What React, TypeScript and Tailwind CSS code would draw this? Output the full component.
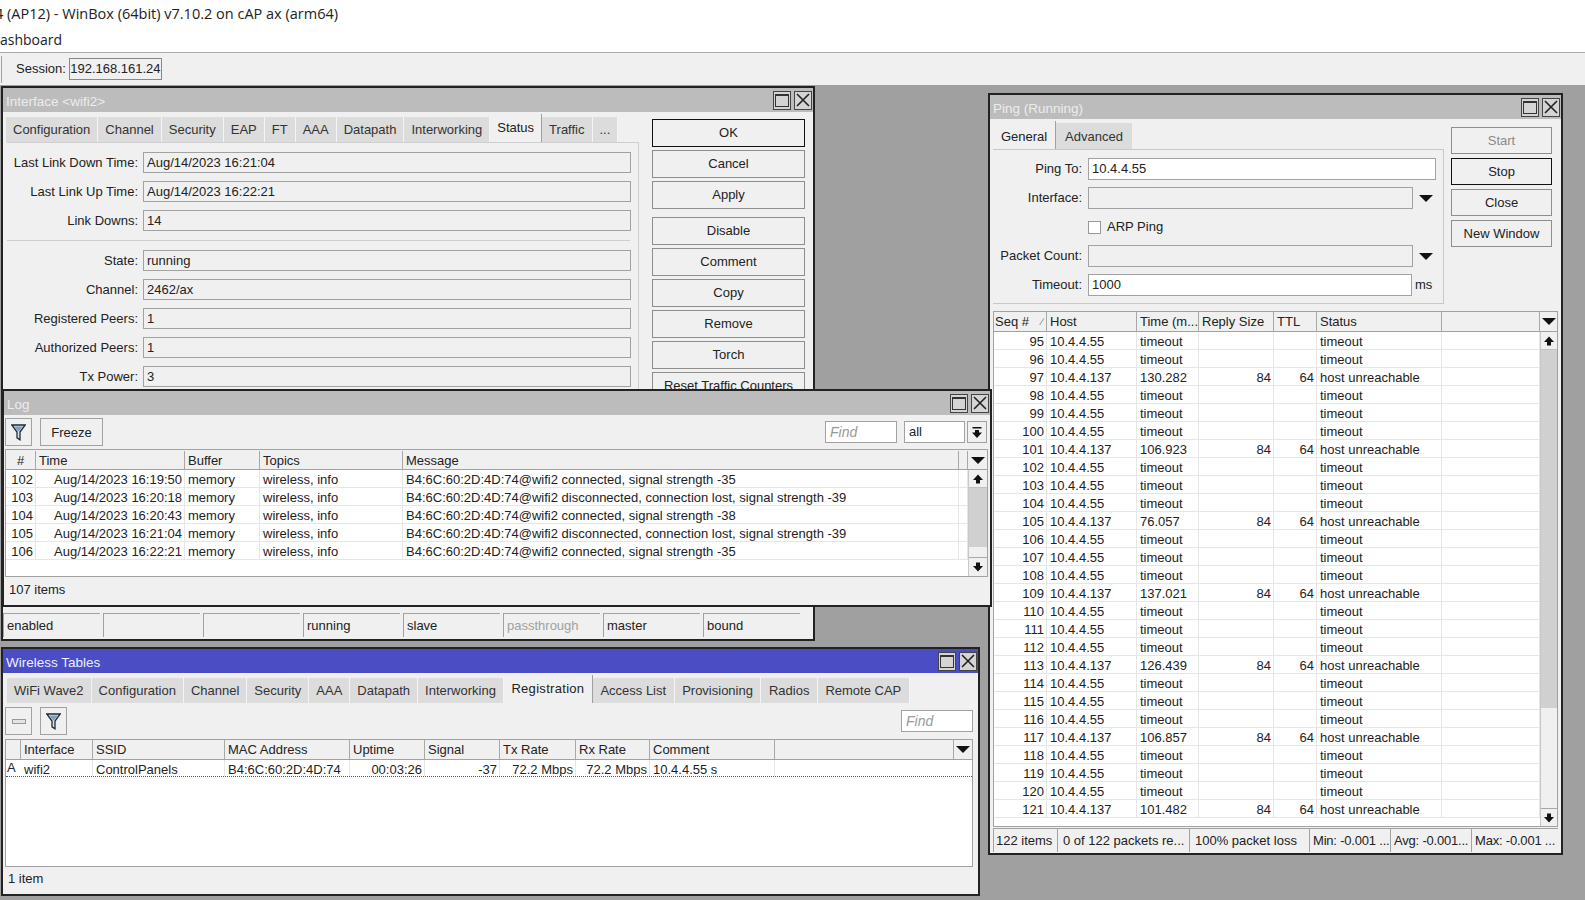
import React from 'react';

const Arrow = ({ dir }: { dir: 'up' | 'down' }) => (
  <svg width="12" height="12" viewBox="0 0 12 12">
    {dir === 'up' ? (
      <path d="M6 1.5 L11 7 H8 V10.5 H4 V7 H1 Z" fill="#111" />
    ) : (
      <path d="M6 10.5 L11 5 H8 V1.5 H4 V5 H1 Z" fill="#111" />
    )}
  </svg>
);

const Caret = () => (
  <svg width="14" height="7" viewBox="0 0 14 7">
    <path d="M0 0 H14 L7 7 Z" fill="#111" />
  </svg>
);

const Funnel = () => (
  <svg width="15" height="17" viewBox="0 0 15 17">
    <path d="M0.8 1 H14.2 L9 8 V15.8 L6 13.8 V8 Z" fill="#d6e2ee" stroke="#1f2a33" strokeWidth="1.3" />
    <path d="M3.2 2.4 H11.8 L8 7.2 H7 Z" fill="#7f9fc2" />
  </svg>
);

const TitleIcons = () => (
  <div className="flex items-center gap-[3px]">
    <div className="flex h-[19px] w-[18px] items-center justify-center border border-[#444] bg-[#d4d4d4]">
      <div className="h-[13px] w-[14px] border border-[#333] border-t-2" />
    </div>
    <div className="flex h-[19px] w-[18px] items-center justify-center border border-[#444] bg-[#d4d4d4]">
      <svg width="14" height="14" viewBox="0 0 14 14">
        <path d="M1 1 L13 13 M13 1 L1 13" stroke="#222" strokeWidth="1.6" />
      </svg>
    </div>
  </div>
);

const TitleBar = ({ title, active }: { title: string; active?: boolean }) => (
  <div
    className={`flex h-[24px] shrink-0 items-center justify-between pl-[3px] pr-[1px] ${
      active ? 'bg-[#4a4dc4] text-[#eef0ff]' : 'bg-[#bcbcbc] text-[#ececec]'
    }`}
  >
    <span className="pt-[4px] text-[13.5px]">{title}</span>
    <TitleIcons />
  </div>
);

const Tab = ({ label, active, wide, className }: { label: string; active?: boolean; wide?: boolean; className?: string }) =>
  active ? (
    <div
      className={`z-10 flex h-[28px] items-start border-r border-[#a0a0a0] bg-[#f0f0f0] pt-[4px] text-[#222] ${
        wide ? 'px-[7.5px]' : 'px-[7px]'
      } ${className ?? ''}`}
    >
      {label}
    </div>
  ) : (
    <div
      className={`flex h-[25px] items-center border-r border-[#f4f4f4] bg-[#dcdcdc] text-[#333] ${
        wide ? 'px-[7.5px]' : 'px-[7px]'
      } ${className ?? ''}`}
    >
      {label}
    </div>
  );

const Btn = ({ label, primary, disabled }: { label: string; primary?: boolean; disabled?: boolean }) => (
  <div
    className={`flex h-[28px] shrink-0 items-center justify-center border bg-[#f0f0f0] ${
      primary ? 'border-[#111]' : 'border-[#8e8e8e]'
    } ${disabled ? 'text-[#8a8a8a]' : 'text-[#222]'}`}
  >
    {label}
  </div>
);

const Field = ({ value, className }: { value?: string; className?: string }) => (
  <div className={`flex h-[21px] items-center border border-[#a2a2a2] bg-[#f0f0f0] px-[3px] text-[#222] ${className ?? ''}`}>
    {value}
  </div>
);

const ToolBtn = ({ children }: { children: React.ReactNode }) => (
  <div className="flex h-[28px] w-[27px] items-center justify-center border border-[#a2a2a2] bg-[#f0f0f0]">{children}</div>
);

const Scroll = ({ thumb, track }: { thumb: string; track: string }) => (
  <div className="flex h-full shrink-0 flex-col border-l border-[#c8c8c8] bg-[#f0f0f0]">
    <div className="flex h-[18px] items-center justify-center border-b border-[#c0c0c0]">
      <Arrow dir="up" />
    </div>
    <div className={`bg-[#d0d0d0] ${thumb}`} />
    <div className={track} />
    <div className="flex flex-1 items-center justify-center border-t border-[#a8a8a8]">
      <Arrow dir="down" />
    </div>
  </div>
);

const Head = ({ label }: { label: string }) => (
  <div className="flex items-center truncate border-r border-[#a8a8a8] pl-[3px] text-[#222]">{label}</div>
);

const Cell = ({ v, right }: { v?: string; right?: boolean }) => (
  <div className={`truncate border-r border-[#e6e6e6] leading-[19px] text-[#222] ${right ? 'px-[2px] text-right' : 'px-[3px]'}`}>{v}</div>
);

const Status = ({ label, className, muted }: { label?: string; className: string; muted?: boolean }) => (
  <div
    className={`flex items-center truncate border-l border-t border-[#a2a2a2] ${
      muted ? 'text-[#a0a0a0]' : 'text-[#222]'
    } ${className}`}
  >
    {label}
  </div>
);

const ifaceTop = [
  ['Last Link Down Time:', 'Aug/14/2023 16:21:04'],
  ['Last Link Up Time:', 'Aug/14/2023 16:22:21'],
  ['Link Downs:', '14'],
];
const ifaceBottom = [
  ['State:', 'running'],
  ['Channel:', '2462/ax'],
  ['Registered Peers:', '1'],
  ['Authorized Peers:', '1'],
  ['Tx Power:', '3'],
];

const IfaceRow = ({ label, value }: { label: string; value: string }) => (
  <div className="flex items-center gap-[5px]">
    <div className="w-[131px] whitespace-nowrap text-right text-[#222]">{label}</div>
    <Field value={value} className="w-[488px]" />
  </div>
);

const InterfaceWindow = () => (
  <div className="absolute left-[1px] top-[1px] flex h-[555px] w-[814px] flex-col overflow-hidden border-2 border-[#222] bg-[#f0f0f0]">
    <TitleBar title="Interface <wifi2>" />
    <div className="flex">
      <div className="w-[636px] pl-[4px] pt-[2px]">
        <div className="-ml-[1px] flex h-[28px] items-end">
          {['Configuration', 'Channel', 'Security', 'EAP', 'FT', 'AAA', 'Datapath', 'Interworking'].map(t => (
            <Tab key={t} label={t} />
          ))}
          <Tab label="Status" active />
          <Tab label="Traffic" />
          <Tab label="..." />
        </div>
        <div className="flex flex-col gap-[8px] border-r border-t border-[#cfcfcf] pb-[20px] pt-[9px]">
          {ifaceTop.map(([l, v]) => (
            <IfaceRow key={l} label={l} value={v} />
          ))}
          <div className="my-[1px] mr-[8px] border-t border-[#cfcfcf]" />
          {ifaceBottom.map(([l, v]) => (
            <IfaceRow key={l} label={l} value={v} />
          ))}
        </div>
      </div>
      <div className="ml-[13px] flex w-[153px] flex-col pt-[7px]">
        <div className="flex flex-col gap-[3px]">
          <Btn label="OK" primary />
          <Btn label="Cancel" />
          <Btn label="Apply" />
        </div>
        <div className="mt-[8px] flex flex-col gap-[3px]">
          {['Disable', 'Comment', 'Copy', 'Remove', 'Torch', 'Reset Traffic Counters'].map(b => (
            <Btn key={b} label={b} />
          ))}
        </div>
      </div>
    </div>
    <div className="mt-auto flex h-[26px] gap-[3px] pb-[2px]">
      <Status label="enabled" className="w-[97px] pl-[3px]" />
      <Status className="w-[97px]" />
      <Status className="w-[97px]" />
      <Status label="running" className="w-[97px] pl-[3px]" />
      <Status label="slave" className="w-[97px] pl-[3px]" />
      <Status label="passthrough" muted className="w-[97px] pl-[3px]" />
      <Status label="master" className="w-[97px] pl-[3px]" />
      <Status label="bound" className="w-[97px] pl-[3px]" />
    </div>
  </div>
);

const logRows = [
  ['102', 'Aug/14/2023 16:19:50', 'B4:6C:60:2D:4D:74@wifi2 connected, signal strength -35'],
  ['103', 'Aug/14/2023 16:20:18', 'B4:6C:60:2D:4D:74@wifi2 disconnected, connection lost, signal strength -39'],
  ['104', 'Aug/14/2023 16:20:43', 'B4:6C:60:2D:4D:74@wifi2 connected, signal strength -38'],
  ['105', 'Aug/14/2023 16:21:04', 'B4:6C:60:2D:4D:74@wifi2 disconnected, connection lost, signal strength -39'],
  ['106', 'Aug/14/2023 16:22:21', 'B4:6C:60:2D:4D:74@wifi2 connected, signal strength -35'],
];

const LogWindow = () => (
  <div className="absolute left-[2px] top-[304px] z-20 flex h-[218px] w-[990px] flex-col overflow-hidden border-2 border-[#222] bg-[#f0f0f0]">
    <TitleBar title="Log" />
    <div className="mt-[3px] flex h-[28px] items-center pl-[1px] pr-[3px]">
      <ToolBtn>
        <Funnel />
      </ToolBtn>
      <div className="ml-[8px] flex h-[28px] w-[63px] items-center justify-center border border-[#a2a2a2] pt-[1px] text-[#222]">Freeze</div>
      <div className="ml-auto flex h-[22px] w-[72px] items-center border border-[#a2a2a2] bg-white px-[4px] text-[14px] italic text-[#999]">Find</div>
      <div className="ml-[7px] flex h-[22px] w-[61px] items-center border border-[#a2a2a2] bg-white px-[4px] text-[#222]">all</div>
      <div className="ml-[2px] flex h-[22px] w-[20px] items-center justify-center border border-[#a2a2a2]">
        <svg width="12" height="13" viewBox="0 0 12 13">
          <path d="M1.5 1 H10.5 V2.5 H1.5 Z M6 12 L11 6.5 H8 V4 H4 V6.5 H1 Z" fill="#111" />
        </svg>
      </div>
    </div>
    <div className="ml-[1px] mt-[3px] flex h-[128px] w-[983px] flex-col border border-[#a2a2a2] bg-white">
      <div className="grid h-[20px] shrink-0 grid-cols-[30px_149px_75px_143px_556px_9px_19px] border-b border-[#a2a2a2] bg-[#f0f0f0] pt-[1px]">
        <div className="flex items-center justify-center border-r border-[#a8a8a8] text-[#222]">#</div>
        <Head label="Time" />
        <Head label="Buffer" />
        <Head label="Topics" />
        <Head label="Message" />
        <div className="border-r border-[#a8a8a8]" />
        <div className="flex items-center justify-center">
          <Caret />
        </div>
      </div>
      <div className="flex flex-1">
        <div className="w-[962px]">
          {logRows.map(r => (
            <div key={r[0]} className="grid h-[18px] grid-cols-[30px_149px_75px_143px_556px_9px] border-b border-[#e6e6e6]">
              <Cell v={r[0]} right />
              <Cell v={r[1]} right />
              <Cell v="memory" />
              <Cell v="wireless, info" />
              <Cell v={r[2]} />
              <Cell />
            </div>
          ))}
        </div>
        <div className="w-[19px]">
          <Scroll thumb="h-[59px]" track="h-[10px]" />
        </div>
      </div>
    </div>
    <div className="flex flex-1 items-center pb-[3px] pl-[5px] text-[#222]">107 items</div>
  </div>
);

const wirelessCols = 'grid-cols-[15px_72px_132px_125px_75px_75px_76px_74px_125px_179px_18px]';

const WirelessWindow = () => (
  <div className="absolute left-[1px] top-[562px] flex h-[249px] w-[979px] flex-col overflow-hidden border-2 border-[#222] bg-[#f0f0f0]">
    <TitleBar title="Wireless Tables" active />
    <div className="mt-[2px] flex h-[28px] items-end pl-[4px]">
      {['WiFi Wave2', 'Configuration', 'Channel', 'Security', 'AAA', 'Datapath', 'Interworking'].map(t => (
        <Tab key={t} label={t} />
      ))}
      <Tab label="Registration" active wide className="tracking-[0.3px]" />
      {['Access List', 'Provisioning', 'Radios', 'Remote CAP'].map(t => (
        <Tab key={t} label={t} wide />
      ))}
    </div>
    <div className="mt-[4px] flex h-[28px] items-center pl-[2px] pr-[5px]">
      <ToolBtn>
        <div className="h-[5px] w-[14px] border border-[#999] bg-[#e4e4e4]" />
      </ToolBtn>
      <div className="ml-[8px]">
        <ToolBtn>
          <Funnel />
        </ToolBtn>
      </div>
      <div className="ml-auto flex h-[22px] w-[72px] items-center border border-[#a2a2a2] bg-white px-[4px] text-[14px] italic text-[#999]">Find</div>
    </div>
    <div className="ml-[2px] mt-[4px] flex h-[128px] w-[968px] flex-col border border-[#a2a2a2] bg-white">
      <div className={`grid h-[20px] shrink-0 border-b border-[#a2a2a2] bg-[#f0f0f0] ${wirelessCols}`}>
        <Head label="" />
        {['Interface', 'SSID', 'MAC Address', 'Uptime', 'Signal', 'Tx Rate', 'Rx Rate', 'Comment', ''].map((h, i) => (
          <Head key={i} label={h} />
        ))}
        <div className="flex items-center justify-center">
          <Caret />
        </div>
      </div>
      <div className={`grid h-[17px] border-b border-dotted border-[#555] ${wirelessCols}`}>
        <div className="pl-[1px] leading-[16px] text-[#222]">A</div>
        <Cell v="wifi2" />
        <Cell v="ControlPanels" />
        <Cell v="B4:6C:60:2D:4D:74" />
        <Cell v="00:03:26" right />
        <Cell v="-37" right />
        <Cell v="72.2 Mbps" right />
        <Cell v="72.2 Mbps" right />
        <Cell v="10.4.4.55 s" />
      </div>
    </div>
    <div className="flex flex-1 items-center pb-[4px] pl-[5px] text-[#222]">1 item</div>
  </div>
);

const pingTimes: Record<number, string> = {
  97: '130.282',
  101: '106.923',
  105: '76.057',
  109: '137.021',
  113: '126.439',
  117: '106.857',
  121: '101.482',
};
const seqs = Array.from({ length: 27 }, (_, i) => 95 + i);
const pingCols = 'grid-cols-[53px_90px_62px_75px_43px_125px_98px]';

const PingRow = ({ label, children }: { label: string; children: React.ReactNode }) => (
  <div className="flex h-[22px] items-center">
    <div className="w-[89px] whitespace-nowrap text-right text-[#222]">{label}</div>
    <div className="ml-[6px] flex items-center">{children}</div>
  </div>
);

const PingWindow = () => (
  <div className="absolute left-[988px] top-[8px] flex h-[762px] w-[575px] flex-col overflow-hidden border-2 border-[#222] bg-[#f0f0f0]">
    <TitleBar title="Ping (Running)" />
    <div className="flex">
      <div className="ml-[3px] mt-[2px] w-[451px]">
        <div className="flex h-[28px] items-end">
          <div className="flex h-[28px] w-[63px] items-start justify-center border-r border-[#a0a0a0] pt-[6px] text-[#222]">General</div>
          <div className="flex h-[26px] w-[76px] items-center justify-center bg-[#dcdcdc] pt-[2px] text-[#333]">Advanced</div>
        </div>
        <div className="flex h-[155px] flex-col gap-[7px] border-b border-r border-t border-[#c8c8c8] pt-[8px]">
          <PingRow label="Ping To:">
            <Field value="10.4.4.55" className="!h-[22px] w-[348px] !bg-white" />
          </PingRow>
          <PingRow label="Interface:">
            <Field className="!h-[22px] w-[325px]" />
            <div className="ml-[6px]">
              <Caret />
            </div>
          </PingRow>
          <PingRow label="">
            <div className="h-[13px] w-[13px] border border-[#999] bg-white" />
            <span className="ml-[6px] text-[#222]">ARP Ping</span>
          </PingRow>
          <PingRow label="Packet Count:">
            <Field className="!h-[22px] w-[325px]" />
            <div className="ml-[6px]">
              <Caret />
            </div>
          </PingRow>
          <PingRow label="Timeout:">
            <Field value="1000" className="!h-[22px] w-[324px] !bg-white" />
            <span className="ml-[3px] text-[#222]">ms</span>
          </PingRow>
        </div>
      </div>
      <div className="ml-[7px] mt-[8px] flex w-[101px] flex-col gap-[4px]">
        <div className="[&>div]:h-[27px]">
          <Btn label="Start" disabled />
        </div>
        <div className="[&>div]:h-[27px]">
          <Btn label="Stop" primary />
        </div>
        <div className="[&>div]:h-[27px]">
          <Btn label="Close" />
        </div>
        <div className="[&>div]:h-[27px]">
          <Btn label="New Window" />
        </div>
      </div>
    </div>
    <div className="ml-[3px] mt-[7px] flex h-[516px] w-[565px] flex-col border border-[#a2a2a2] bg-white">
      <div className="flex h-[20px] shrink-0 border-b border-[#a2a2a2] bg-[#f0f0f0]">
        <div className={`grid w-[546px] ${pingCols}`}>
          <div className="flex items-center justify-between border-r border-[#a8a8a8] pl-[1px] pr-[3px] text-[#222]">
            Seq #
            <span className="text-[10px] text-[#777]">∕</span>
          </div>
          {['Host', 'Time (m...', 'Reply Size', 'TTL', 'Status', ''].map((h, i) => (
            <Head key={i} label={h} />
          ))}
        </div>
        <div className="flex flex-1 items-center justify-center">
          <Caret />
        </div>
      </div>
      <div className="flex flex-1">
        <div className="w-[546px]">
          {seqs.map(n => {
            const t = pingTimes[n];
            return (
              <div key={n} className={`grid h-[18px] border-b border-[#e6e6e6] ${pingCols}`}>
                <Cell v={String(n)} right />
                <Cell v={t ? '10.4.4.137' : '10.4.4.55'} />
                <Cell v={t ?? 'timeout'} />
                <Cell v={t ? '84' : ''} right />
                <Cell v={t ? '64' : ''} right />
                <Cell v={t ? 'host unreachable' : 'timeout'} />
                <Cell />
              </div>
            );
          })}
        </div>
        <div className="w-[17px]">
          <Scroll thumb="h-[358px]" track="h-[100px]" />
        </div>
      </div>
    </div>
    <div className="ml-[3px] mt-[1px] flex h-[24px]">
      <Status label="122 items" className="w-[64px] pl-[2px]" />
      <Status label="0 of 122 packets re..." className="w-[132px] pl-[5px]" />
      <Status label="100% packet loss" className="w-[120px] pl-[5px]" />
      <Status label="Min: -0.001 ..." className="w-[81px] pl-[3px] tracking-[-0.2px]" />
      <Status label="Avg: -0.001..." className="w-[81px] pl-[3px] tracking-[-0.2px]" />
      <Status label="Max: -0.001 ..." className="w-[87px] pl-[3px] tracking-[-0.2px]" />
    </div>
  </div>
);

export default function App() {
  return (
    <div className="flex h-[900px] w-[1585px] flex-col overflow-hidden bg-white font-['Liberation_Sans',sans-serif] text-[13px]">
      <div className="-ml-[5px] flex h-[27px] shrink-0 items-center whitespace-nowrap font-['Open_Sans',sans-serif] text-[14.5px] text-[#222]">
        4 (AP12) - WinBox (64bit) v7.10.2 on cAP ax (arm64)
      </div>
      <div className="flex h-[25px] shrink-0 items-center font-['Open_Sans',sans-serif] text-[14px] text-[#222]">ashboard</div>
      <div className="flex h-[33px] shrink-0 items-center border-t border-[#a8a8a8] bg-[#f0f0f0]">
        <div className="h-[27px] w-[2px] border-r border-[#a2a2a2]" />
        <span className="ml-[14px] text-[#222]">Session:</span>
        <div className="ml-[3px] flex h-[22px] w-[93px] items-center justify-center border border-[#888] text-[#222]">192.168.161.24</div>
      </div>
      <div className="relative flex-1 bg-[#a0a0a0]">
        <InterfaceWindow />
        <LogWindow />
        <WirelessWindow />
        <PingWindow />
      </div>
    </div>
  );
}
